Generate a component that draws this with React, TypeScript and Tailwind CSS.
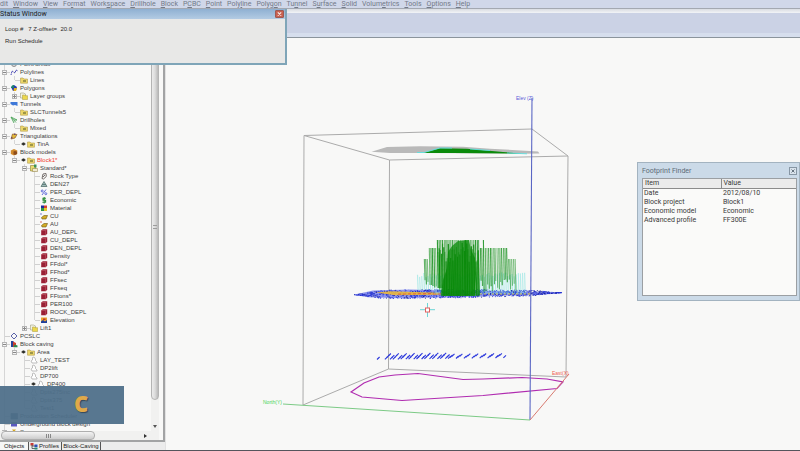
import React from "react";

// [visible text, index of the underlined access key]
const MENUS: [string, number][] = [
  ["dit", -1], ["Window", 0], ["View", 0], ["Format", 2], ["Workspace", 4], ["Drillhole", 0],
  ["Block", 0], ["PCBC", 1], ["Point", 0], ["Polyline", 4], ["Polygon", 5], ["Tunnel", 2],
  ["Surface", 1], ["Solid", 0], ["Volumetrics", 5], ["Tools", 0], ["Options", 0], ["Help", 0],
];

type Kind =
  | "lines" | "folder" | "ball" | "group" | "tunnel" | "drill" | "tri" | "blocks" | "std" | "rock"
  | "den" | "per" | "eco" | "mat" | "cu" | "au" | "cube" | "elev" | "diamond" | "caving" | "page"
  | "sched" | "ug" | "survey" | "areas";

// [guide cells, icon, label, has eye mark]
// Guide cells: "|" line, "t" tee, "L" elbow, "-" and "+" boxes on a line, "m" and "p" boxes ending one.
const ROWS: [string, Kind, string, boolean?][] = [
  ["t", "areas", "Point areas"],
  ["-", "lines", "Polylines"],
  ["|L", "folder", "Lines"],
  ["-", "ball", "Polygons"],
  ["|p", "group", "Layer groups"],
  ["-", "tunnel", "Tunnels"],
  ["|L", "folder", "SLCTunnels5"],
  ["-", "drill", "Drillholes"],
  ["|L", "folder", "Mixed"],
  ["-", "tri", "Triangulations"],
  ["|L", "folder", "TinA", true],
  ["-", "blocks", "Block models"],
  ["|m", "folder", "Block1*", true],
  ["| -", "std", "Standard*"],
  ["| |t", "rock", "Rock Type"],
  ["| |t", "den", "DEN27"],
  ["| |t", "per", "PER_DEPL"],
  ["| |t", "eco", "Economic"],
  ["| |t", "mat", "Material"],
  ["| |t", "cu", "CU"],
  ["| |t", "au", "AU"],
  ["| |t", "cube", "AU_DEPL"],
  ["| |t", "cube", "CU_DEPL"],
  ["| |t", "cube", "DEN_DEPL"],
  ["| |t", "cube", "Density"],
  ["| |t", "cube", "FFdol*"],
  ["| |t", "cube", "FFhod*"],
  ["| |t", "cube", "FFsec"],
  ["| |t", "cube", "FFseq"],
  ["| |t", "cube", "FFtons*"],
  ["| |t", "cube", "PER100"],
  ["| |t", "cube", "ROCK_DEPL"],
  ["| |L", "elev", "Elevation"],
  ["| p", "group", "Lift1"],
  ["t", "diamond", "PCSLC"],
  ["-", "caving", "Block caving"],
  ["|m", "folder", "Area", true],
  ["| t", "page", "LAY_TEST"],
  ["| t", "page", "DP2lift"],
  ["| t", "page", "DP700"],
  ["| t", "page", "DP400", true],
  ["| t", "page", "Dpts275inc"],
  ["| t", "page", "Dpts375"],
  ["| L", "page", "Test1"],
  ["t", "sched", "Production Scheduler"],
  ["t", "ug", "Underground block design"],
  ["+", "survey", "Survey"],
];

function Guide({ c }: { c: string }) {
  const full = "|t-+".includes(c);
  const half = "Lmp".includes(c);
  const box = "-+mp".includes(c);
  return (
    <svg viewBox="0 0 10 8" className="h-2 w-[10px] shrink-0" shapeRendering="crispEdges" aria-hidden="true">
      {(full || half) && <rect x="4" y="0" width="1" height={full ? 8 : 4} fill="#d6d6d6" />}
      {c !== "|" && c !== " " && <rect x="5" y="4" width="5" height="1" fill="#d0d0d0" />}
      {box && (
        <g>
          <rect x="2.5" y="2.5" width="4" height="4" fill="#f6f6f6" stroke="#b5b5b5" />
          <rect x="3" y="4" width="3" height="1" fill="#888" />
          {"+p".includes(c) && <rect x="4" y="3" width="1" height="3" fill="#888" />}
        </g>
      )}
    </svg>
  );
}

function Glyph({ kind }: { kind: Kind }) {
  const art: Record<Kind, React.ReactNode> = {
    areas: <circle cx="4" cy="4" r="2.5" fill="#ddd" stroke="#777" strokeWidth=".8" />,
    lines: <path d="M1 7 2 3l3 2 1-3 2 1" fill="none" stroke="#4a4ab5" strokeWidth="1" strokeDasharray="1.5 .6" />,
    folder: (
      <g>
        <path d="M.5 2h2.5l1 1H7.5v4.2H.5z" fill="#ecd668" stroke="#b39c50" strokeWidth=".6" />
        <path d="M3 4h3v2H3z" fill="#6b6a34" opacity=".6" />
      </g>
    ),
    ball: (
      <g>
        <path d="M1 3 4 1l3 2-1 3.5-3 .5z" fill="#2a3ab0" />
        <path d="M2 1.5 4 1v3L1 4z" fill="#18856b" />
        <path d="M4 4h3L6 7 3.5 7z" fill="#e6b220" />
      </g>
    ),
    group: (
      <g>
        <path d="M.5 1h3l2 1v4h-5z" fill="#f2f2e4" stroke="#a0a080" strokeWidth=".6" />
        <path d="M2.500 3h2l.6.700H7.600V7.500h-5.100z" fill="#ecd84d" stroke="#a8983c" strokeWidth=".5" />
      </g>
    ),
    tunnel: <path d="M.5 2h7v4L5 5 3 5.500.5 4z" fill="#3e78d8" />,
    drill: <path d="M1 1 4 7M1 1l6 3M1 1l5 5.500M4 4l3 0" stroke="#4fa65c" strokeWidth=".9" fill="none" />,
    tri: (
      <g>
        <path d="M1 7 2.500 2 7 2.500 5 6z" fill="#e4ba3c" stroke="#8b5c26" strokeWidth=".7" />
        <path d="M4 1.500h1.500V3H4zM1 5h1.500v1.500H1z" fill="#704b66" />
      </g>
    ),
    blocks: (
      <g>
        <path d="M.8 2.500 4 1l3.300 1.500V6L4 7.500.8 6z" fill="#d08a2c" />
        <path d="M3.500 3.500 5 3l2 .8V6l-2 1-1.500-.8z" fill="#8d4d1c" />
      </g>
    ),
    std: (
      <g>
        <path d="M.5 1.500h4l1 1V7h-5z" fill="#e8dd6d" stroke="#8a7a36" strokeWidth=".6" />
        <path d="M4 .5h2.500v3H4z" fill="#3e9155" />
        <path d="M2.500 4.500h5v3h-5z" fill="#f1ead0" stroke="#8a7a36" strokeWidth=".5" />
      </g>
    ),
    rock: <path d="M2 6.500 3 2l3-.5.300 3L3.500 7zM3 5l2-2" fill="none" stroke="#66605c" strokeWidth=".9" />,
    den: <path d="M1 6.500 4 1.500l3 5zM2 4.500h4" fill="#9fb9b9" stroke="#55736f" strokeWidth=".8" />,
    per: (
      <g stroke="#5560d8" strokeWidth=".9" fill="none">
        <path d="M2 7 6 1.500" />
        <circle cx="2.200" cy="3" r="1" />
        <circle cx="5.800" cy="5.700" r="1" />
      </g>
    ),
    eco: <path d="M6 2.200H3v2h2.600v2H2.400M4.200 1v6.500" fill="none" stroke="#2e8d3c" strokeWidth="1.100" />,
    mat: (
      <g>
        <path d="M1 1.500h3v2.500H1z" fill="#1f2a9a" />
        <path d="M4 1.500h3v2.500H4z" fill="#d4402f" />
        <path d="M1 4h3v3H1z" fill="#2f9447" />
        <path d="M4 4h3v3H4z" fill="#e5c52c" />
      </g>
    ),
    cu: (
      <g>
        <path d="M1.500 5.500 4 3.500h3.500L6 7H2z" fill="#d3ac24" stroke="#6b561a" strokeWidth=".6" />
        <path d="M1 1v2" stroke="#5560d8" strokeWidth=".8" />
      </g>
    ),
    au: (
      <g>
        <path d="M1.500 5.500 4 3.500h3.500L6 7H2z" fill="#d3ac24" stroke="#6b561a" strokeWidth=".6" />
        <path d="M1 1v2" stroke="#d34a3c" strokeWidth=".8" />
      </g>
    ),
    cube: (
      <g>
        <path d="M1.200 2.500 2.800 1.200H7.200V5.800L5.700 7.200H1.200z" fill="#9a2035" />
        <path d="M1.200 2.500h4.400v4.600M5.600 2.500l1.500-1.200" fill="none" stroke="#c96d78" strokeWidth=".5" />
      </g>
    ),
    elev: (
      <g>
        <path d="M1 1.500h6V7H1z" fill="#e9a531" />
        <path d="M1 5.500 3 4l2 1.500L7 4v3H1z" fill="#1f3f9a" />
        <path d="M3 2.500h2.500V4H3z" fill="#c4382b" />
      </g>
    ),
    diamond: <path d="M4 1 7 4 4 7 1 4z" fill="none" stroke="#4750a0" strokeWidth=".9" />,
    caving: (
      <g>
        <path d="M1 1h2.500v6H1z" fill="#25439a" />
        <path d="M3 1.500l3 1.500V7H3z" fill="#d0402c" />
        <path d="M4.500 4.500 7.500 5.500V7.300h-4z" fill="#2c8a50" />
      </g>
    ),
    page: <path d="M2 7 1 5l1.500-1V1.500L4 1l1.500 2v1.500L7 6v1z" fill="#fff" stroke="#a5a5a5" strokeWidth=".7" />,
    sched: <path d="M1 1.500h6.500V7H1zM2 3h4M2 5h4" fill="#3a5568" stroke="#2f4557" strokeWidth=".7" />,
    ug: <path d="M1 2h6v4.500H1z" fill="#5a5ac0" />,
    survey: (
      <g>
        <path d="M2 1.500h4L4 4z" fill="#d8a820" />
        <path d="M4 3 1.500 7.500M4 3l2.500 4.500M4 3v4" stroke="#3c3426" strokeWidth=".8" />
      </g>
    ),
  };
  return (
    <svg viewBox="0 0 8 8" className="size-2 shrink-0" aria-hidden="true">
      {art[kind]}
    </svg>
  );
}

function Eye() {
  return (
    <svg viewBox="0 0 7 8" className="h-2 w-[7px] shrink-0" aria-hidden="true">
      <path d="M.8 4Q3.500 1.500 6.200 4 3.500 6.500.8 4z" fill="#8c8c84" />
      <circle cx="3.500" cy="4" r="1.400" fill="#2c2c28" />
    </svg>
  );
}

function Tree() {
  return (
    <ul className="min-h-0 flex-1 overflow-hidden pt-[22px]" aria-label="Project objects">
      {ROWS.map(([cells, kind, label, eye]) => (
        <li key={label} className="flex h-2 items-center">
          {cells.split("").map((c, i) => (
            <Guide key={i} c={c} />
          ))}
          {eye && <Eye />}
          <Glyph kind={kind} />
          <button
            type="button"
            className={
              label === "Block1*"
                ? "ml-[2px] whitespace-nowrap text-[6px] leading-[8px] text-[#f2382c]"
                : "ml-[2px] whitespace-nowrap text-[6px] leading-[8px] text-[#404040]"
            }
          >
            {label}
          </button>
        </li>
      ))}
    </ul>
  );
}

function Sidebar() {
  return (
    <aside className="flex w-[166px] shrink-0 flex-col border-r border-[#e2e2e2] bg-[#ececec]">
      <div className="flex min-h-0 flex-1 flex-col border-r-2 border-b-2 border-[#a2a3a4] bg-[#f8f8f7] pr-1">
        <div className="flex min-h-0 flex-1">
          <Tree />
          <div className="flex w-2 shrink-0 flex-col bg-[#f1f1f0] pt-4">
            <div className="flex flex-1 items-center justify-center rounded-b-sm border border-[#b4b4b4] bg-linear-to-r from-[#ececec] via-[#dcdcdc] to-[#b9b9b9]">
              <span className="h-1 w-1 border-y border-[#9c9c9c]" />
            </div>
            <div className="flex h-[31px] items-end justify-center pb-[3px]">
              <svg viewBox="0 0 4 3" className="h-[3px] w-1" aria-hidden="true">
                <path d="M0 0h4L2 3z" fill="#555" />
              </svg>
            </div>
          </div>
        </div>
        <div className="flex h-[9px] shrink-0 items-center justify-between bg-[#f1f1f0] pl-px">
          <div className="flex h-[9px] w-[94px] items-center justify-center rounded-sm border border-[#aeaeae] bg-linear-to-b from-[#f4f4f4] to-[#cccccc]">
            <span className="flex h-1 w-[5px] justify-between border-x border-[#888]">
              <span className="mx-auto w-px bg-[#888]" />
            </span>
          </div>
          <svg viewBox="0 0 3 4" className="mr-3 h-1 w-[3px]" aria-hidden="true">
            <path d="M0 0v4l3-2z" fill="#333" />
          </svg>
        </div>
      </div>
      <div className="flex h-2 shrink-0 text-[6px] leading-[8px] text-[#222]">
        <button type="button" className="w-7 bg-[#f6f6f6] pl-1 text-left">Objects</button>
        <button type="button" className="flex w-[34px] items-center gap-px border-x border-[#555] pl-px">
          <svg viewBox="0 0 8 8" className="size-2 shrink-0" aria-hidden="true">
            <path d="M.5 1h3v2.500h-3z" fill="#c83a34" />
            <path d="M2 3v3.500H5M2 4H5" stroke="#333" strokeWidth=".7" fill="none" />
            <path d="M4.500 2.500h3V5h-3z" fill="#2a4db8" />
            <path d="M4.500 5.500h3v2h-3z" fill="#2a8a7a" />
          </svg>
          Profiles
        </button>
        <button type="button" className="w-[39px] border-r border-[#555] text-center whitespace-nowrap">Block-Caving</button>
      </div>
    </aside>
  );
}

// Repeatable noise in 0..1 so that the plotted samples stay the same on each render.
const noise = (n: number) => {
  const v = Math.sin(n * 12.9898) * 43758.5453;
  return v - Math.floor(v);
};

function Scene() {
  const columns = Array.from({ length: 56 }, (_, i) => {
    const x = 424 + i * 1.65 + noise(i + 77) * 0.5;
    const peak = x >= 437 && x <= 487 && !(x > 478 && i % 3);
    const top = peak ? 240 : x >= 428 && x <= 508 ? 248 : 259;
    const bottom = x < 440 ? 280 + (x - 424) / 2 + noise(i) * 4 : x < 480 ? 295 : 278 + noise(i) * 14;
    return { x, top, bottom, o: 0.45 + noise(i + 5) * 0.4 };
  });
  const core = Array.from({ length: 36 }, (_, i) => ({
    x: 438 + i * 1.15,
    top: 240 + noise(i + 3) * 22,
    bottom: i < 4 ? 288 : 296,
  }));
  const haze = Array.from({ length: 52 }, (_, i) => ({ x: 417.5 + i * 2.1, top: 272 + noise(i + 9) * 5 }));
  const disc = Array.from({ length: 1100 }, (_, i) => {
    const t = noise(i + 40);
    const x = 354 + t * 207;
    const ends = Math.min(1, t * 7, (1 - t) * 7);
    const thick = ends * (t < 0.45 ? 4.4 : 4.4 - (t - 0.45) * 3.6);
    return { x, y: 294.3 - t * 2 + (noise(i + 2000) * 2 - 1) * thick };
  });
  const dashes = Array.from({ length: 17 }, (_, g) =>
    Array.from({ length: g < 1 || g > 15 ? 1 : g < 9 ? 5 : 3 }, (_, k) => ({
      x: 377 + g * 7.9 + k * (g < 9 ? 1.7 : 1.9),
      y: 359.500 - (g < 9 ? (k % 3) * 1.700 : k * 1.100) - g * 0.1,
    })),
  ).flat();
  return (
    <svg viewBox="166 38 634 412" preserveAspectRatio="xMinYMin meet" className="h-full w-full" role="img" aria-label="Block model view">
      <g fill="none" stroke="#ababab" strokeWidth="1">
        <path d="M304 135.500 532 129 568 156 389.500 160z" />
        <path d="M304 135.500 303 405M389.500 160l-1 209M568 156l-2 221" />
        <path d="M303 405 388.500 369 566 377" />
      </g>
      <path d="M371.500 151.700 387 147l33-.7 43 .5 27 1.900 48 2.800 1.500 2-19.500.2-97-.8-33 .2z" fill="#b9b9b9" />
      <path d="M423 152.900 440 148.200l27 .5 36 3.300 20 1.700-70-.8z" fill="#0a8a0a" />
      <path d="M417 152.500h7l16-4.500h12M470 149l20 1.500M507 153l20 .8" fill="none" stroke="#5fe0e0" strokeWidth=".9" />

      <path d="M354 294.800 373 290.500 410 289.500 450 290.500 500 291.300 561 292.700 545 294.500 480 296.500 400 298.300 368 297.300z" fill="#4654e6" fillOpacity=".6" />
      {disc.map((p, i) => (
        <rect key={i} x={p.x} y={p.y} width="1.100" height=".8" fill={i % 3 ? "#2432d4" : i % 2 ? "#8f98f2" : "#1a1f8a"} />
      ))}
      <path d="M376 292.500 390 291.300 440 292.700 438 294.700 395 295.200z" fill="#ecb93a" fillOpacity=".9" />
      <path d="M398 294.200 425 293.500 442 294" stroke="#dd7040" strokeWidth="1.200" fill="none" strokeDasharray="3 2" />
      <path d="M480 293.800h52" stroke="#d6c460" strokeWidth="1.200" strokeDasharray="2 2" />

      <g stroke="#6fe0dc" strokeWidth="1.100" strokeOpacity=".5">
        {haze.map((l, i) => (
          <path key={i} d={`M${l.x} ${l.top}L${l.x + 0.6} ${294 - (i < 8 ? 4 : 0)}`} />
        ))}
      </g>
      <g stroke="#0b8a12" strokeWidth="1.100">
        {columns.map((l, i) => (
          <path key={i} d={`M${l.x} ${l.top}L${l.x + 0.7} ${l.bottom}`} strokeOpacity={l.o} />
        ))}
      </g>
      <path d="M448 252 452 246 458 241 469 240 471 250 475 258 476 274 474 296 441 296 443 280 447 268z" fill="#088a08" fillOpacity=".75" />
      <g stroke="#088a08" strokeWidth="1.200">
        {core.map((l, i) => (
          <path key={i} d={`M${l.x} ${l.top}L${l.x + 0.8} ${l.bottom}`} strokeOpacity={i % 2 ? 0.85 : 0.5} />
        ))}
      </g>

      <path d="M427.500 303v5M427.500 312v5M420 309.700h5.500M429.500 309.700h5.500" stroke="#6cd6d6" strokeWidth="1" />
      <rect x="425.500" y="308" width="4" height="4" fill="#fff" stroke="#e06060" />

      <g stroke="#2b38dc" strokeWidth="1.100">
        {dashes.map((d, i) => (
          <path key={i} d={`M${d.x} ${d.y}l2.600-2.500`} />
        ))}
      </g>

      <path
        d="M351 392 364 383 379 377 395 375 418 373.500 463 379.500 483 379 522 377.500 547 379 563 382 557 388.500 483 395.500 402 400.500 362 397z"
        fill="none"
        stroke="#b02cb0"
        strokeWidth="1.200"
      />
      <path d="M532 98 530 420" stroke="#5a66c4" strokeWidth="1.100" />
      <path d="M283 404 530 420" stroke="#7cca86" strokeWidth="1" />
      <path d="M530 420 569 374" stroke="#d87a70" strokeWidth="1" />
      <g className="text-[5px]" fontFamily="Liberation Sans">
        <text x="516" y="100" fill="#5a5ad8">Elev (Z)</text>
        <text x="263" y="404" fill="#4ad45a">North(Y)</text>
        <text x="552" y="375" fill="#ee5c50">East(X)</text>
      </g>
    </svg>
  );
}

function StatusWindow() {
  return (
    <section className="absolute top-[9px] left-0 h-14 w-[287px] border-r-2 border-b-2 border-[#7fa5b8] bg-[#e8e8e7]">
      <header className="flex h-[10px] items-center justify-between bg-linear-to-b from-[#8fb0d2] to-[#b3cbe3] pr-px">
        <h2 className="font-[Roboto] text-[7px] leading-[10px] text-[#222]">Status Window</h2>
        <button type="button" aria-label="Close status window" className="flex h-2 w-[9px] items-center justify-center rounded-[1px] border border-[#9c5a54] bg-[#c9604f]">
          <svg viewBox="0 0 5 4" className="h-1 w-[5px]" aria-hidden="true">
            <path d="M.8.3 4.200 3.700M4.200.3.8 3.700" stroke="#f4e4e0" strokeWidth="1.100" />
          </svg>
        </button>
      </header>
      <div className="flex flex-col gap-1 px-[5px] pt-[6px] text-[6px] leading-[8px] text-[#2c2c2c]">
        <p className="whitespace-pre">{"Loop #   7 Z-offset=  20.0"}</p>
        <p>Run Schedule</p>
      </div>
    </section>
  );
}

function FootprintFinder() {
  const rows = [
    ["Date", "2012/08/10"],
    ["Block project", "Block1"],
    ["Economic model", "Economic"],
    ["Advanced profile", "FF300E"],
  ];
  return (
    <section className="absolute top-[162px] right-0 flex h-[139px] w-[163px] flex-col border border-[#a3b3c0] bg-[#cbdae8] pr-[2px] pb-1 pl-1 font-[Roboto] text-[7px] leading-[9px]">
      <header className="flex h-[15px] shrink-0 items-center justify-between">
        <h2 className="pt-px text-[#5c6a76]">Footprint Finder</h2>
        <button type="button" aria-label="Close footprint finder" className="flex size-2 items-center justify-center border border-[#8796a4] bg-[#d9e3ec]">
          <svg viewBox="0 0 4 4" className="size-1" aria-hidden="true">
            <path d="M.5.5l3 3M3.500.5l-3 3" stroke="#5a6874" strokeWidth=".9" />
          </svg>
        </button>
      </header>
      <div className="min-h-0 flex-1 border border-[#9b9fa3] bg-[#fafaf9] text-[#383838]">
        <table className="w-full table-fixed border-collapse text-left">
          <thead>
            <tr className="h-[9px] border-b border-[#8b8b8b] bg-[#ebebeb]">
              <th scope="col" className="w-[78px] border-r border-[#8b8b8b] p-0 pl-[2px] font-normal">Item</th>
              <th scope="col" className="p-0 pl-[2px] font-normal">Value</th>
            </tr>
          </thead>
          <tbody>
            {rows.map(([item, value]) => (
              <tr key={item} className="h-[9px]">
                <td className="p-0 pl-px">{item}</td>
                <td className="p-0 pl-[2px]">{value}</td>
              </tr>
            ))}
          </tbody>
        </table>
      </div>
    </section>
  );
}

export default function App() {
  return (
    <div className="relative flex h-screen flex-col overflow-hidden border-b border-[#55555c] bg-[#f8f8f7] font-['Liberation_Sans',Arial,sans-serif]">
      <nav aria-label="Main menu" className="flex h-2 shrink-0 gap-[5px] bg-[#d0d7e9] font-[Roboto] text-[7px] leading-[8px] text-[#737a88]">
        {MENUS.map(([name, key]) => (
          <button key={name} type="button">
            {key < 0 ? name : (
              <>
                {name.slice(0, key)}
                <u>{name[key]}</u>
                {name.slice(key + 1)}
              </>
            )}
          </button>
        ))}
      </nav>
      <div className="flex h-[30px] shrink-0 flex-col border-y border-t-[#a3a8b1] border-b-[#8b949c] bg-[#cbd2e5]">
        <div className="h-1 bg-linear-to-b from-[#d9dce2] to-[#f2f4f7]" />
        <div className="flex-1" />
        <div className="h-1 bg-[#d6deed]" />
      </div>
      <div className="flex min-h-0 flex-1">
        <Sidebar />
        <main className="min-w-0 flex-1">
          <Scene />
        </main>
      </div>
      <StatusWindow />
      <FootprintFinder />
      <div className="absolute top-[386px] left-0 flex h-[38px] w-[124px] items-center bg-[#4f708a]/95 pb-1 pl-[74px]">
        <span className="font-['Open_Sans'] text-[22px] leading-[34px] font-extrabold text-[#dfa94a] [text-shadow:1px_1px_1px_#33475a]">C</span>
      </div>
    </div>
  );
}
